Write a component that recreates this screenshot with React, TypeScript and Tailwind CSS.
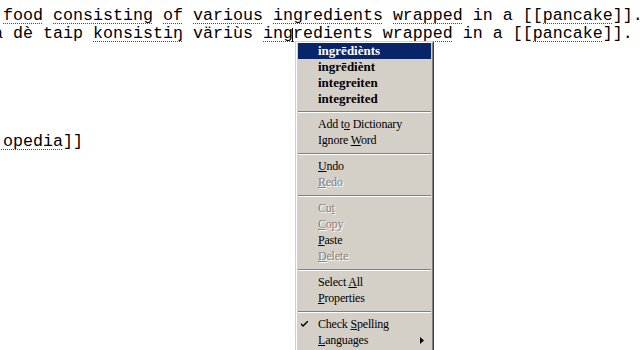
import React from "react";

const mono = { fontFamily: '"Liberation Mono", "Courier New", monospace' };

function W({ children }: { children: React.ReactNode }) {
  return (
    <span className="inline-block h-[18px] bg-[linear-gradient(90deg,#ff0000_1px,transparent_1px)] bg-[length:2px_1px] bg-[position:0_16px] bg-repeat-x">
      {children}
    </span>
  );
}

type Item =
  | { sep: true }
  | {
      sep?: false;
      pre: string;
      key?: string;
      post?: string;
      bold?: boolean;
      selected?: boolean;
      disabled?: boolean;
      check?: boolean;
      arrow?: boolean;
    };

const items: Item[] = [
  { pre: "ingrēdiènts", bold: true, selected: true },
  { pre: "ingrēdiènt", bold: true },
  { pre: "integreiten", bold: true },
  { pre: "integreited", bold: true },
  { sep: true },
  { pre: "Add t", key: "o", post: " Dictionary" },
  { pre: "Ignore ", key: "W", post: "ord" },
  { sep: true },
  { pre: "", key: "U", post: "ndo" },
  { pre: "", key: "R", post: "edo", disabled: true },
  { sep: true },
  { pre: "Cu", key: "t", post: "", disabled: true },
  { pre: "", key: "C", post: "opy", disabled: true },
  { pre: "", key: "P", post: "aste" },
  { pre: "", key: "D", post: "elete", disabled: true },
  { sep: true },
  { pre: "Select ", key: "A", post: "ll" },
  { pre: "", key: "P", post: "roperties" },
  { sep: true },
  { pre: "Check ", key: "S", post: "pelling", check: true },
  { pre: "", key: "L", post: "anguages", arrow: true },
];

export default function App() {
  return (
    <div className="relative w-[640px] h-[350px] overflow-hidden bg-white text-black">
      <div
        className="ml-[-7px] pt-[7px] text-[16.67px] leading-[18px] whitespace-pre"
        style={mono}
      >
        <div className="h-[18px]">
          {" "}
          <W>food</W> <W>consisting</W> <W>of</W> <W>various</W>{" "}
          <W>ingredients</W> <W>wrapped</W> in a [[<W>pancake</W>]].
        </div>
        <div className="h-[18px]">
          a dè taip <W>konsistiŋ</W> väriùs <W>ingredients</W>{" "}
          <W>wrapped</W> in a [[<W>pancake</W>]].
        </div>
        <div className="h-[18px]" />
        <div className="h-[18px]" />
        <div className="h-[18px]" />
        <div className="h-[18px]" />
        <div className="h-[18px]" />
        <div className="h-[18px]">
          <W> opedia</W>]]
        </div>
      </div>

      {/* caret */}
      <div className="absolute left-[292px] top-[28px] w-px h-[14px] bg-black" />

      {/* context menu */}
      <div
        className="absolute left-[295px] top-[41px] w-[139px] border-t border-l border-r border-b border-t-[#d4d0c8] border-l-[#d4d0c8] border-r-[#404040] border-b-[#404040]"
        style={{ fontFamily: '"Liberation Serif", "Times New Roman", serif' }}
      >
        <div className="border-t border-l border-r border-b border-t-white border-l-white border-r-[#808080] border-b-[#808080] bg-[#d4d0c8] px-px pb-[3px]">
          {items.map((it, i) =>
            it.sep ? (
              <div key={i} className="h-[10px] pt-[4px]">
                <div className="h-px bg-[#808080]" />
                <div className="h-px bg-white" />
              </div>
            ) : (
              <div
                key={i}
                className={
                  "relative h-[16px] pl-[20px] leading-[15px] whitespace-pre " +
                  (it.selected ? "bg-[#0a246a] text-white " : "") +
                  (it.bold
                    ? "font-bold text-[13px] "
                    : "text-[12px] tracking-[-0.2px] ") +
                  (it.disabled
                    ? "text-[#808080] [text-shadow:1px_1px_0_#ffffff] "
                    : "")
                }
              >
                {it.check && (
                  <svg
                    className="absolute left-[3px] top-[4px]"
                    width="7"
                    height="7"
                    viewBox="0 0 7 7"
                  >
                    <path
                      d="M0 2 L0 4 L2 6 L7 1 L7 -1 L2 4 Z"
                      fill="#000"
                    />
                  </svg>
                )}
                {it.pre}
                {it.key && <span className="underline underline-offset-[1px]">{it.key}</span>}
                {it.post}
                {it.arrow && (
                  <svg
                    className="absolute right-[7px] top-[4px]"
                    width="4"
                    height="7"
                    viewBox="0 0 4 7"
                  >
                    <path d="M0 0 L4 3.5 L0 7 Z" fill="#000" />
                  </svg>
                )}
              </div>
            )
          )}
        </div>
      </div>
    </div>
  );
}
